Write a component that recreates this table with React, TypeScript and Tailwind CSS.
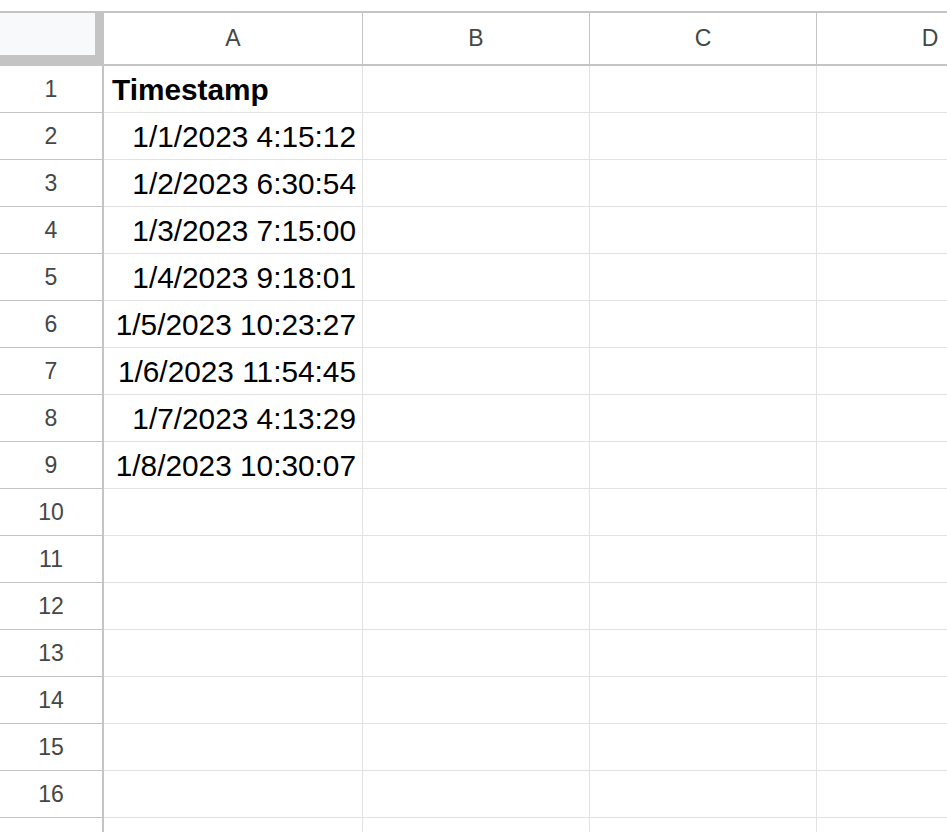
import React from "react";

const data = [
  { v: "Timestamp", bold: true },
  { v: "1/1/2023 4:15:12" },
  { v: "1/2/2023 6:30:54" },
  { v: "1/3/2023 7:15:00" },
  { v: "1/4/2023 9:18:01" },
  { v: "1/5/2023 10:23:27" },
  { v: "1/6/2023 11:54:45" },
  { v: "1/7/2023 4:13:29" },
  { v: "1/8/2023 10:30:07" },
];

const rows = Array.from({ length: 17 }, (_, i) => i + 1);

export default function App() {
  return (
    <div
      className="w-[947px] h-[832px] overflow-hidden bg-white"
      style={{ fontFamily: '"Liberation Sans", Arial, sans-serif' }}
    >
      <div className="h-[11px]" />
      {/* header row */}
      <div className="flex border-t-2 border-[#c4c4c4] h-[55px]">
        <div className="w-[104px] shrink-0 h-[53px] bg-[#c4c4c4]">
          <div className="w-[95px] h-[42px] bg-[#f8f9fa]" />
        </div>
        {[
          { l: "A", w: "w-[259px]" },
          { l: "B", w: "w-[227px]" },
          { l: "C", w: "w-[227px]" },
          { l: "D", w: "w-[227px]" },
        ].map((c) => (
          <div
            key={c.l}
            className={`${c.w} shrink-0 h-[53px] border-r border-b-2 border-[#c4c4c4] flex items-center justify-center text-[23px] text-[#444746]`}
          >
            {c.l}
          </div>
        ))}
      </div>
      {rows.map((r) => {
        const d = data[r - 1];
        return (
          <div key={r} className="flex h-[47px]">
            <div className="w-[104px] shrink-0 border-r-2 border-b border-[#c4c4c4] flex items-center justify-center text-[23px] text-[#444746] pt-[1px]">
              {r}
            </div>
            <div
              className={`w-[259px] shrink-0 border-r border-b border-[#e2e2e2] flex items-center text-[29.8px] text-black pt-[3px] ${
                d && d.bold ? "justify-start pl-[8px] font-bold" : "justify-end pr-[6px]"
              }`}
            >
              {d ? d.v : ""}
            </div>
            <div className="w-[227px] shrink-0 border-r border-b border-[#e2e2e2]" />
            <div className="w-[227px] shrink-0 border-r border-b border-[#e2e2e2]" />
            <div className="w-[227px] shrink-0 border-r border-b border-[#e2e2e2]" />
          </div>
        );
      })}
    </div>
  );
}
